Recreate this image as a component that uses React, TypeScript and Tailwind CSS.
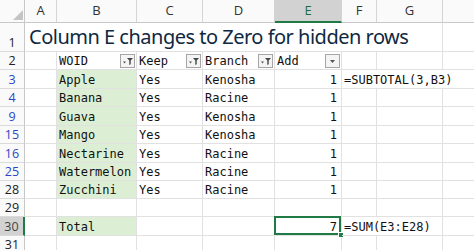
import React from "react";

// Szerokości kolumn (z obramowaniem)
const cols = [
  { key: "A", w: "w-[32px]" },
  { key: "B", w: "w-[80px]" },
  { key: "C", w: "w-[66px]" },
  { key: "D", w: "w-[72px]" },
  { key: "E", w: "w-[67px]" },
  { key: "F", w: "w-[35px]" },
  { key: "G", w: "w-[66px]" },
  { key: "H", w: "w-[66px]" },
];

type Row = {
  n: number;
  h: 18 | 19;
  blue?: boolean;
  cells: Partial<Record<string, string>>;
  green?: boolean;
  hide?: string[];
};

const rows: Row[] = [
  { n: 3, h: 19, blue: true, green: true, cells: { B: "Apple", C: "Yes", D: "Kenosha", E: "1", F: "=SUBTOTAL(3,B3)" }, hide: ["F", "G"] },
  { n: 4, h: 18, blue: true, green: true, cells: { B: "Banana", C: "Yes", D: "Racine", E: "1" } },
  { n: 9, h: 19, blue: true, green: true, cells: { B: "Guava", C: "Yes", D: "Kenosha", E: "1" } },
  { n: 15, h: 18, blue: true, green: true, cells: { B: "Mango", C: "Yes", D: "Kenosha", E: "1" } },
  { n: 16, h: 19, blue: true, green: true, cells: { B: "Nectarine", C: "Yes", D: "Racine", E: "1" } },
  { n: 25, h: 18, blue: true, green: true, cells: { B: "Watermelon", C: "Yes", D: "Racine", E: "1" } },
  { n: 28, h: 18, green: true, cells: { B: "Zucchini", C: "Yes", D: "Racine", E: "1" } },
  { n: 29, h: 18, cells: {} },
];

function FilterButton({ applied }: { applied?: boolean }) {
  return (
    <div className="absolute right-[1px] top-[2px] w-[15px] h-[14px] border border-[#a6a6a6] bg-[#f4f4f4]">
      <svg width="13" height="12" viewBox="0 0 13 12" className="block">
        {applied ? (
          <>
            <path d="M2 6.5h3l-1.5 2z" fill="#555" />
            <path d="M6 3h6l-2.3 2.6v3.6l-1.4 0.8v-4.4z" fill="#444" />
          </>
        ) : (
          <path d="M4 5h5l-2.5 3z" fill="#555" />
        )}
      </svg>
    </div>
  );
}

function RowHead({ n, h, blue, selected }: { n: number; h: 18 | 19 | 29; blue?: boolean; selected?: boolean }) {
  const height = h === 19 ? "h-[19px]" : h === 29 ? "h-[29px]" : "h-[18px]";
  return (
    <div
      className={`${height} w-[25px] shrink-0 flex items-end justify-center pb-[1px] border-b border-[#dadada] text-[12.5px] leading-none ${
        selected ? "bg-[#d2d2d2] border-r-2 border-r-[#1f7a45] text-[#444]" : "bg-[#fafafa] border-r border-r-[#c8c8c8]"
      } ${blue ? "text-[#2b46c8]" : selected ? "" : "text-[#222]"}`}
      style={{ fontFamily: '"Open Sans", sans-serif' }}
    >
      <span className="mb-[1px]">{n}</span>
    </div>
  );
}

export default function App() {
  const mono = { fontFamily: '"DejaVu Sans Mono", monospace' };
  return (
    <div className="w-[474px] h-[250px] overflow-hidden bg-white text-[#111]">
      {/* Nagłówki kolumn */}
      <div className="flex h-[23px]">
        <div className="w-[25px] shrink-0 relative bg-[#fafafa] border-r border-b border-[#c8c8c8]">
          <svg width="25" height="22" className="absolute left-0 top-0">
            <path d="M23 10v10h-10z" fill="#c4c4c4" />
          </svg>
        </div>
        {cols.map((c) => (
          <div
            key={c.key}
            className={`${c.w} shrink-0 flex items-center justify-center text-[13px] border-r border-[#d4d4d4] ${
              c.key === "E"
                ? "bg-[#d2d2d2] border-b-2 border-b-[#1f7a45] text-[#1f6b3f]"
                : "bg-[#fafafa] border-b border-b-[#c8c8c8] text-[#333]"
            }`}
            style={{ fontFamily: '"Open Sans", sans-serif' }}
          >
            {c.key !== "H" && c.key}
          </div>
        ))}
      </div>

      {/* Wiersz 1 - tytuł */}
      <div className="flex h-[29px]">
        <RowHead n={1} h={29} />
        {cols.map((c) => (
          <div
            key={c.key}
            className={`${c.w} shrink-0 relative border-b border-[#e1e1e1] ${c.key === "G" ? "border-r" : ""}`}
          >
            {c.key === "A" && (
              <span
                className="absolute left-[4px] bottom-[0px] whitespace-nowrap text-[20px] tracking-[-0.5px] leading-none text-[#0e2841] pb-[4px]"
                style={{ fontFamily: '"Noto Sans", sans-serif' }}
              >
                Column E changes to Zero for hidden rows
              </span>
            )}
          </div>
        ))}
      </div>

      {/* Wiersz 2 - nagłówki tabeli */}
      <div className="flex h-[18px]">
        <RowHead n={2} h={18} />
        {cols.map((c) => {
          const label: Record<string, string> = { B: "WOID", C: "Keep", D: "Branch", E: "Add" };
          return (
            <div
              key={c.key}
              className={`${c.w} shrink-0 relative border-b border-r border-[#e1e1e1] text-[12px] leading-none flex items-end pb-[2px] pl-[2px]`}
              style={mono}
            >
              {label[c.key] && <span className="whitespace-nowrap">{label[c.key]}</span>}
              {["B", "C", "D"].includes(c.key) && <FilterButton applied />}
              {c.key === "E" && <FilterButton />}
            </div>
          );
        })}
      </div>

      {/* Wiersze danych */}
      {rows.map((r) => (
        <div key={r.n} className={`flex ${r.h === 19 ? "h-[19px]" : "h-[18px]"}`}>
          <RowHead n={r.n} h={r.h} blue={r.blue} />
          {cols.map((c) => {
            const v = r.cells[c.key];
            const hidden = r.hide?.includes(c.key);
            const isGreen = c.key === "B" && r.green;
            return (
              <div
                key={c.key}
                className={`${c.w} shrink-0 relative border-b border-[#e1e1e1] ${hidden ? "" : "border-r"} ${
                  isGreen ? "bg-[#dcefd5]" : ""
                } text-[12px] leading-none flex items-end pb-[2px] ${c.key === "E" ? "justify-end pr-[4px]" : "pl-[2px]"}`}
                style={mono}
              >
                {v && <span className="whitespace-nowrap">{v}</span>}
              </div>
            );
          })}
        </div>
      ))}

      {/* Wiersz 30 - suma */}
      <div className="flex h-[19px]">
        <RowHead n={30} h={19} selected />
        {cols.map((c) => (
          <div
            key={c.key}
            className={`${c.w} shrink-0 relative border-b border-[#e1e1e1] ${c.key === "F" ? "" : "border-r"} ${
              c.key === "B" ? "bg-[#dcefd5]" : ""
            } text-[12px] leading-none flex items-end pb-[2px] ${c.key === "E" ? "justify-end pr-[4px]" : "pl-[2px]"}`}
            style={mono}
          >
            {c.key === "B" && <span>Total</span>}
            {c.key === "E" && (
              <>
                <span>7</span>
                <div className="absolute -left-[1px] -top-[1px] -right-[0px] -bottom-[0px] border-2 border-[#1f7a45]" />
                <div className="absolute -right-[3px] -bottom-[3px] w-[6px] h-[6px] bg-[#1f7a45] border border-white" />
              </>
            )}
            {c.key === "F" && <span className="whitespace-nowrap">=SUM(E3:E28)</span>}
          </div>
        ))}
      </div>

      {/* Wiersz 31 */}
      <div className="flex h-[18px]">
        <RowHead n={31} h={18} />
        {cols.map((c) => (
          <div key={c.key} className={`${c.w} shrink-0 border-b border-r border-[#e1e1e1]`} />
        ))}
      </div>
    </div>
  );
}
